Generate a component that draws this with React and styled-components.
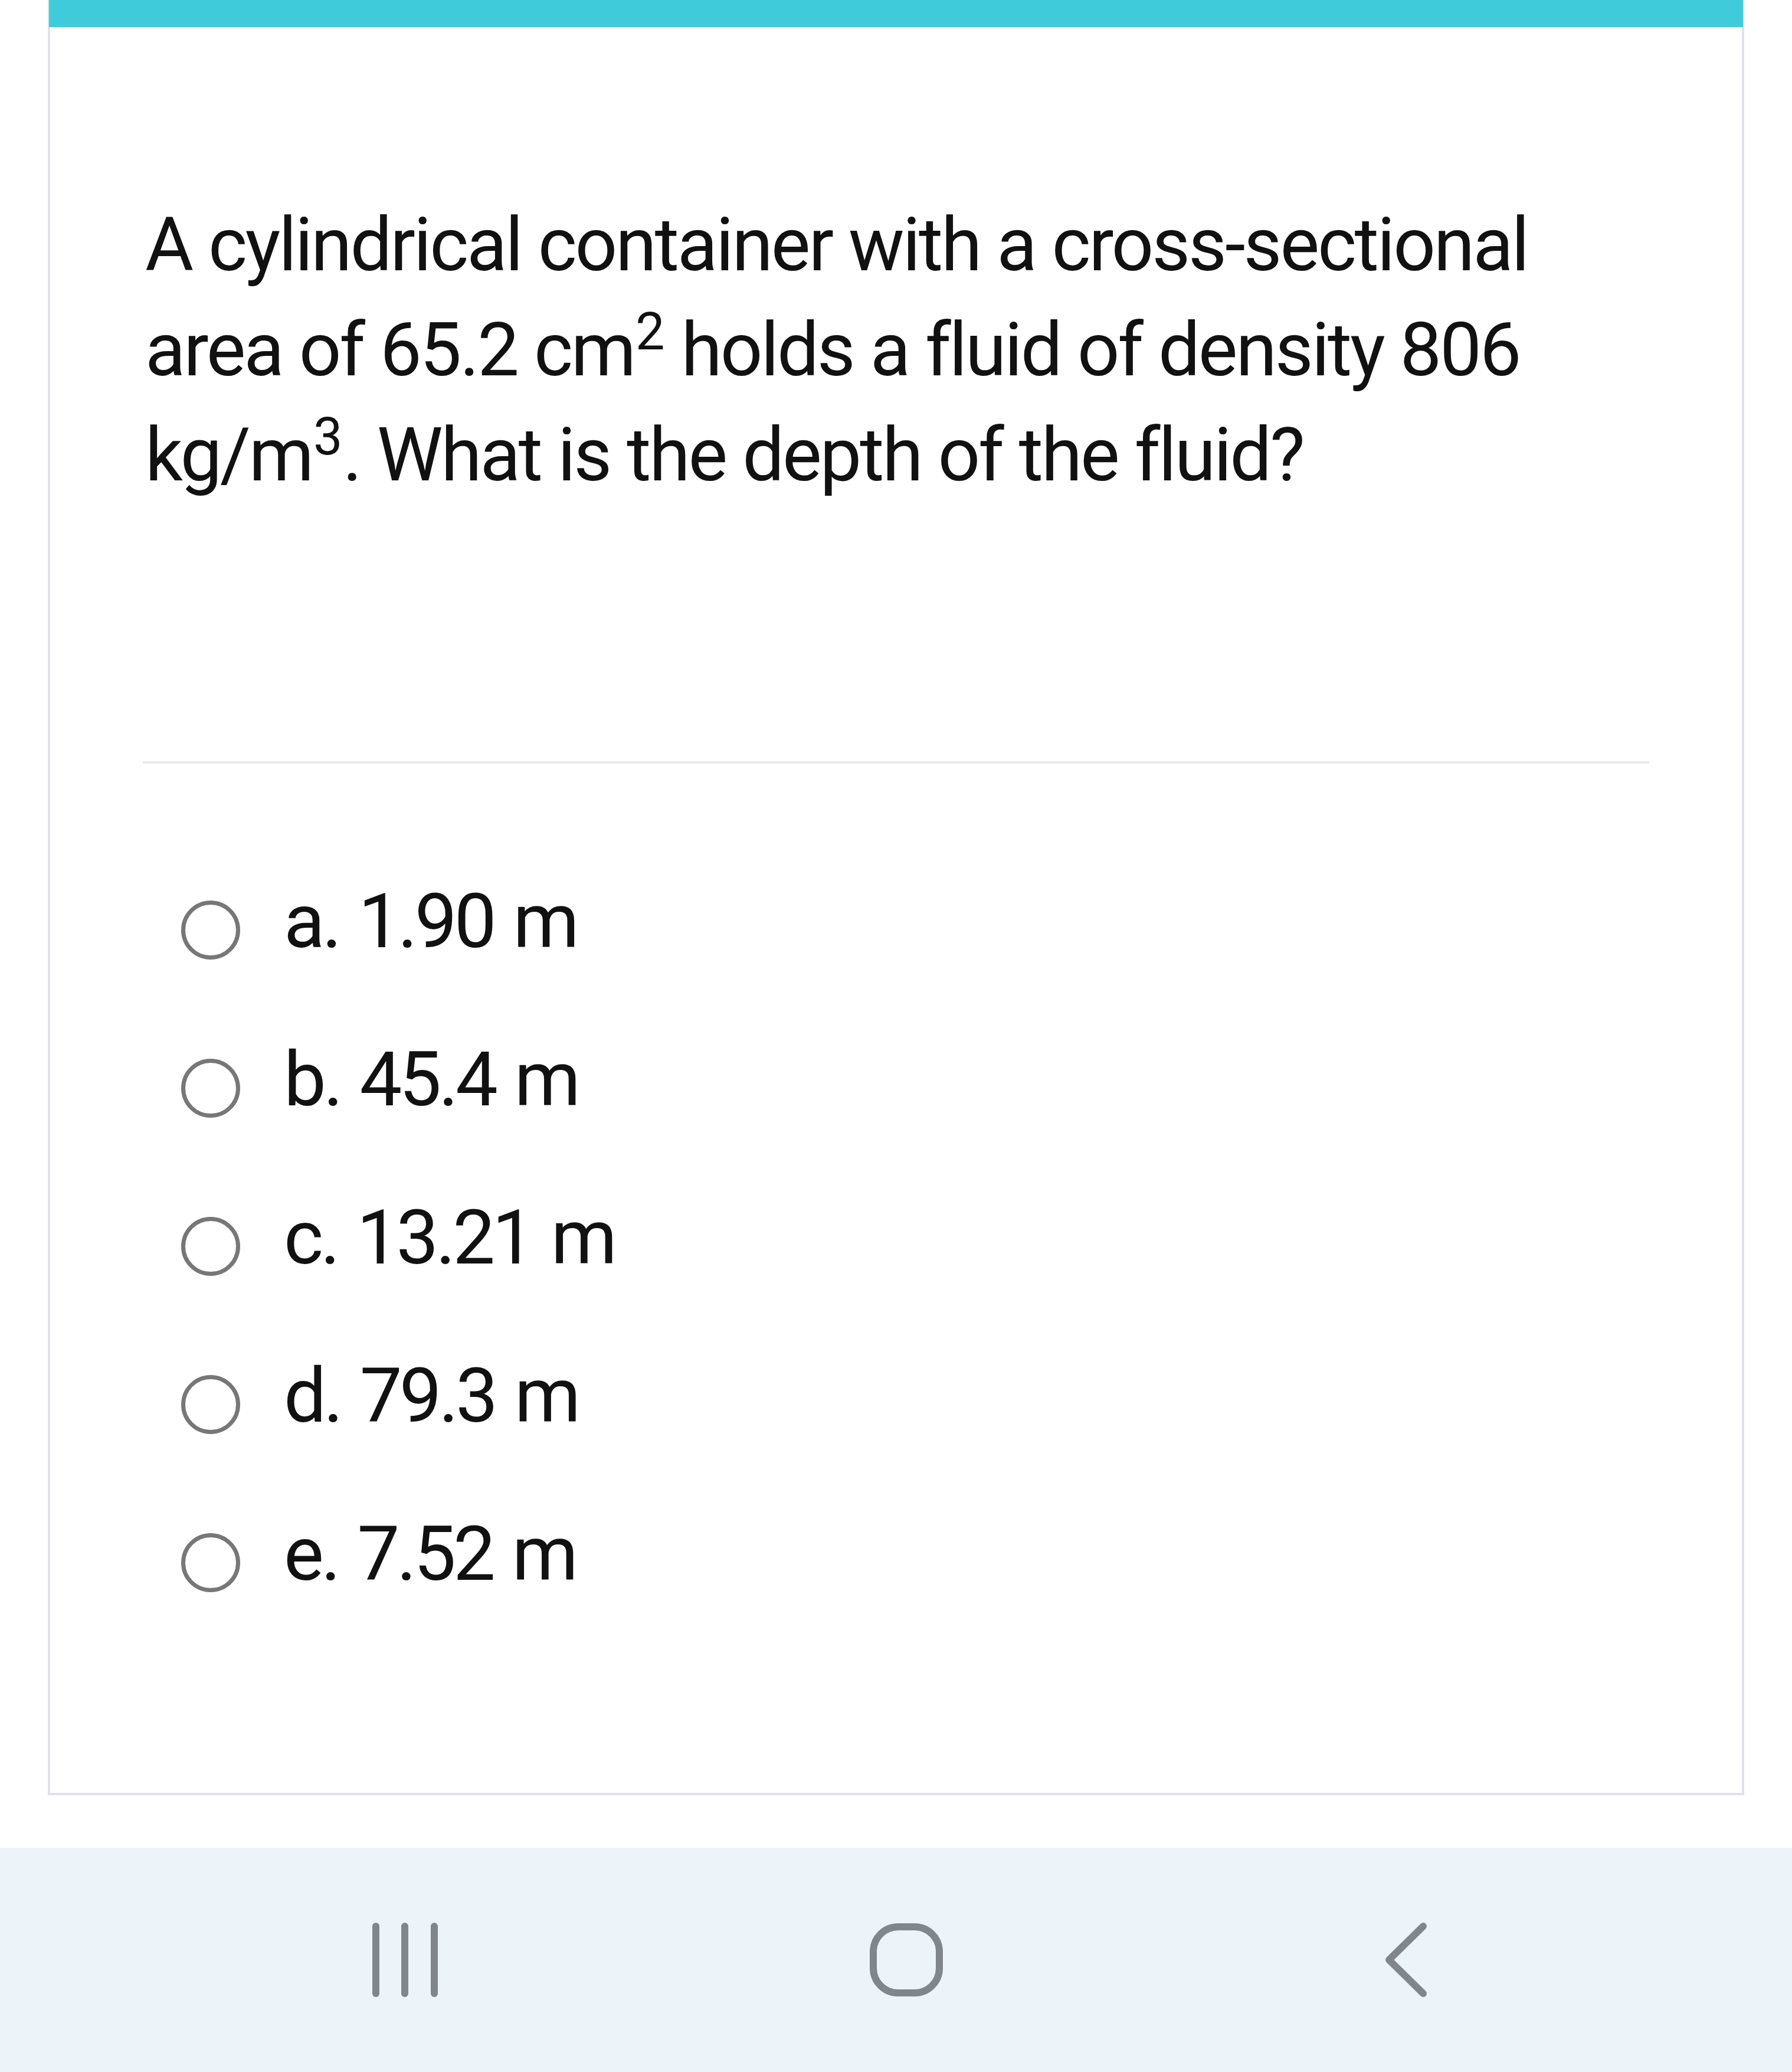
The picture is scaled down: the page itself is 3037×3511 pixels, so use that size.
import React from 'react';
import styled, { createGlobalStyle } from 'styled-components';

const GlobalStyle = createGlobalStyle`
  html, body {
    margin: 0;
    padding: 0;
    background: #ffffff;
  }

  body {
    width: 3037px;
    font-family: Roboto, "Liberation Sans", Arial, sans-serif;
    color: #111111;
  }
`

const Page = styled.div`
  display: flex;
  flex-direction: column;
  min-height: 3511px;
`

const Card = styled.section`
  margin-left: 81px;
  width: 2875px;
  height: 3042px;
  box-sizing: border-box;
  border: 4px solid #dfe2e7;
  border-top: none;
  background: #ffffff;
  display: flex;
  flex-direction: column;
`

const AccentBar = styled.div`
  height: 46px;
  background: #40cbdb;
  margin: 0 -2px;
`

const CardBody = styled.div`
  padding: 280px 157px 0 157px;
`

const Question = styled.p`
  margin: 0 0 0 4px;
  font-size: 126px;
  line-height: 178px;
  font-weight: 400;
  letter-spacing: -3.2px;

  sup {
    font-size: 0.7em;
    line-height: 0;
    letter-spacing: 0;
    vertical-align: 0.5em;
    margin-left: 2px;
  }
`

const Divider = styled.hr`
  margin: 430px 0 0 0;
  height: 4px;
  border: none;
  background: #e8eaed;
`

const OptionList = styled.div`
  display: flex;
  flex-direction: column;
  padding-top: 133px;
`

const Option = styled.label`
  display: flex;
  align-items: center;
  height: 268px;
  padding-left: 65px;
  gap: 74px;
  cursor: pointer;
`

const Radio = styled.span`
  flex: none;
  width: 100px;
  height: 100px;
  box-sizing: border-box;
  border-radius: 50%;
  border: 7px solid #777777;
  margin-top: 30px;
`

const OptionText = styled.span`
  font-size: 128px;
  line-height: 268px;
  letter-spacing: -5px;
  word-spacing: 6px;
`

const Spacer = styled.div`
  flex: 1;
  min-height: 89px;
`

const NavBar = styled.nav`
  height: 380px;
  background: #ecf3f9;
  display: grid;
  grid-template-columns: repeat(3, 850px);
  justify-content: center;
  align-items: center;
  padding-left: 34px;
`

const NavButton = styled.button`
  justify-self: center;
  display: flex;
  align-items: center;
  justify-content: center;
  width: 200px;
  height: 200px;
  padding: 0;
  border: none;
  background: transparent;
  color: #80868b;
`

const RecentIcon = () => (
  <svg width="120" height="126" viewBox="0 0 120 126" fill="none" stroke="currentColor" strokeWidth="12" strokeLinecap="round">
    <path d="M11 6v114" />
    <path d="M60 6v114" />
    <path d="M110 6v114" />
  </svg>
)

const HomeIcon = () => (
  <svg width="124" height="124" viewBox="0 0 124 124" fill="none" stroke="currentColor" strokeWidth="12">
    <rect x="6" y="6" width="112" height="112" rx="42" />
  </svg>
)

const BackIcon = () => (
  <svg width="80" height="126" viewBox="0 0 80 126" fill="none" stroke="currentColor" strokeWidth="12" strokeLinecap="round" strokeLinejoin="round">
    <path d="M66 6L8 63l58 57" />
  </svg>
)

const options = [
  { key: 'a', text: '1.90 m' },
  { key: 'b', text: '45.4 m' },
  { key: 'c', text: '13.21 m' },
  { key: 'd', text: '79.3 m' },
  { key: 'e', text: '7.52 m' },
]

const App = () => {
  return (
    <Page>
      <GlobalStyle />
      <Card>
        <AccentBar />
        <CardBody>
          <Question>
            A cylindrical container with a cross-sectional area of 65.2 cm<sup>2</sup> holds a fluid of density 806 kg/m<sup>3</sup>. What is the depth of the fluid?
          </Question>
          <Divider />
          <OptionList>
            {options.map((o) => (
              <Option key={o.key}>
                <Radio />
                <OptionText>{o.key}. {o.text}</OptionText>
              </Option>
            ))}
          </OptionList>
        </CardBody>
      </Card>
      <Spacer />
      <NavBar>
        <NavButton aria-label="Recent apps"><RecentIcon /></NavButton>
        <NavButton aria-label="Home"><HomeIcon /></NavButton>
        <NavButton aria-label="Back"><BackIcon /></NavButton>
      </NavBar>
    </Page>
  )
}

export default App
